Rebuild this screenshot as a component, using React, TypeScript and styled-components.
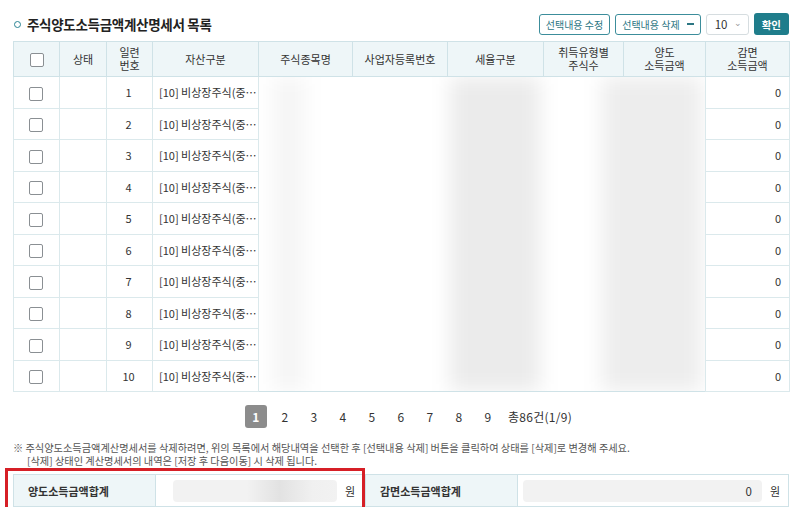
import React, { FC } from 'react'
import styled, { createGlobalStyle } from 'styled-components'

const GlobalStyle = createGlobalStyle`
  html, body {
    margin: 0;
    padding: 0;
    background: #fff;
    font-family: "Noto Sans CJK KR", "Noto Sans", sans-serif;
    color: #333;
  }
`

const COLUMNS = [
  { w: 46, label: '' },
  { w: 47, label: '상태' },
  { w: 46, label: '일련\n번호' },
  { w: 106, label: '자산구분' },
  { w: 94, label: '주식종목명' },
  { w: 95, label: '사업자등록번호' },
  { w: 96, label: '세율구분' },
  { w: 80, label: '취득유형별\n주식수' },
  { w: 82, label: '양도\n소득금액' },
  { w: 84, label: '감면\n소득금액' },
]

const ROWS = Array.from({ length: 10 }, (_, i) => i + 1)
const PAGES = [1, 2, 3, 4, 5, 6, 7, 8, 9]

// blurred-out columns: width + grey strength of each smudge strip
const SMUDGES = [
  { w: 14, tone: 0 },
  { w: 32, tone: 0.04 },
  { w: 145, tone: 0 },
  { w: 90, tone: 0.08 },
  { w: 62, tone: 0 },
  { w: 100, tone: 0.07 },
  { w: 30, tone: 0 },
]

const App: FC = () => {
  return (
    <>
      <GlobalStyle />
      <Page>
        <TopBar>
          <Title>
            <TitleDot />
            주식양도소득금액계산명세서 목록
          </Title>
          <Actions>
            <OutlineButton>선택내용 수정</OutlineButton>
            <OutlineButton>
              선택내용 삭제 <Minus />
            </OutlineButton>
            <PageSize>
              10 <Chevron>⌄</Chevron>
            </PageSize>
            <PrimaryButton>확인</PrimaryButton>
          </Actions>
        </TopBar>

        <Table>
          <colgroup>
            {COLUMNS.map((c, i) => (
              <col key={i} style={{ width: c.w }} />
            ))}
          </colgroup>
          <thead>
            <tr>
              {COLUMNS.map((c, i) => (
                <Th key={i}>{i === 0 ? <CheckBox /> : c.label}</Th>
              ))}
            </tr>
          </thead>
          <tbody>
            {ROWS.map((n) => (
              <tr key={n}>
                <Td $align="center"><CheckBox /></Td>
                <Td />
                <Td $align="center">{n}</Td>
                <Td $align="left">[10] 비상장주식(중…</Td>
                {n === 1 && (
                  <Redacted colSpan={5} rowSpan={10}>
                    <BlurLayer>
                      {SMUDGES.map((s, i) => (
                        <Smudge key={i} $w={s.w} $tone={s.tone} />
                      ))}
                    </BlurLayer>
                  </Redacted>
                )}
                <Td $align="right">0</Td>
              </tr>
            ))}
          </tbody>
        </Table>

        <Pager>
          {PAGES.map((p) => (
            <PageNum key={p} $active={p === 1}>{p}</PageNum>
          ))}
          <Total>총86건(1/9)</Total>
        </Pager>

        <Notes>
          <NoteLine>※ 주식양도소득금액계산명세서를 삭제하려면, 위의 목록에서 해당내역을 선택한 후 [선택내용 삭제] 버튼을 클릭하여 상태를 [삭제]로 변경해 주세요.</NoteLine>
          <NoteLine $indent>[삭제] 상태인 계산명세서의 내역은 [저장 후 다음이동] 시 삭제 됩니다.</NoteLine>
        </Notes>

        <Summary>
          <Highlight />
          <SumLabel>양도소득금액합계</SumLabel>
          <SumValue>
            <AmountBox $blurred />
            <Unit>원</Unit>
          </SumValue>
          <SumLabel>감면소득금액합계</SumLabel>
          <SumValue>
            <AmountBox>0</AmountBox>
            <Unit>원</Unit>
          </SumValue>
        </Summary>
      </Page>
    </>
  )
}

const Page = styled.div`
  width: 800px;
  padding: 12px 11px 0 13px;
  box-sizing: border-box;
`

const TopBar = styled.div`
  display: flex;
  align-items: center;
  justify-content: space-between;
  height: 24px;
  margin-bottom: 5px;
`

const Title = styled.h2`
  display: flex;
  align-items: center;
  gap: 6px;
  margin: 0;
  font-size: 13.5px;
  font-weight: 700;
  color: #222;
  letter-spacing: -0.3px;
`

const TitleDot = styled.span`
  width: 5px;
  height: 5px;
  border: 1.5px solid #2a8494;
  border-radius: 50%;
  margin-left: 1px;
`

const Actions = styled.div`
  display: flex;
  align-items: center;
  gap: 5px;
`

const OutlineButton = styled.button`
  display: flex;
  align-items: center;
  gap: 6px;
  height: 21px;
  padding: 0 6px;
  border: 1px solid #3c8d9b;
  border-radius: 3px;
  background: #fff;
  color: #2c7683;
  font-family: inherit;
  font-size: 10px;
`

const Minus = styled.span`
  width: 7px;
  height: 2px;
  background: #2c7683;
  margin-left: 1px;
`

const PageSize = styled.div`
  display: flex;
  align-items: center;
  justify-content: space-between;
  width: 43px;
  height: 21px;
  box-sizing: border-box;
  padding: 0 6px 0 8px;
  border: 1px solid #d6dde0;
  border-radius: 3px;
  font-size: 11.5px;
  color: #333;
`

const Chevron = styled.span`
  font-size: 9px;
  color: #999;
  line-height: 1;
  margin-top: -4px;
`

const PrimaryButton = styled.button`
  height: 22px;
  padding: 0 8px;
  border: none;
  border-radius: 3px;
  background: #1f7d8b;
  color: #fff;
  font-family: inherit;
  font-size: 10.5px;
  font-weight: 700;
`

const Table = styled.table`
  width: 776px;
  table-layout: fixed;
  border-collapse: collapse;
  font-size: 11px;
  border-left: 1px solid #cfe2e7;
  border-right: 1px solid #cfe2e7;
  border-bottom: 1px solid #cfe2e7;
`

const Th = styled.th`
  height: 34px;
  padding: 0;
  background: #eef6f8;
  border: 1px solid #cfe2e7;
  font-weight: 400;
  color: #333;
  line-height: 13px;
  white-space: pre-line;
  text-align: center;
  vertical-align: middle;
`

const Td = styled.td<{ $align?: 'left' | 'center' | 'right' }>`
  height: 30.4px;
  padding: 0 8px 0 6px;
  border: 1px solid #dbe9ec;
  text-align: ${(p) => p.$align || 'center'};
  color: #333;
  white-space: nowrap;
  overflow: hidden;
  text-overflow: clip;
  vertical-align: middle;
`

const Redacted = styled.td`
  padding: 0;
  border: none;
  background: #fff;
  overflow: hidden;
`

const BlurLayer = styled.div`
  display: flex;
  height: 314px;
  filter: blur(10px);
`

const Smudge = styled.div<{ $w: number; $tone: number }>`
  width: ${(p) => p.$w}px;
  flex-shrink: 0;
  background: rgba(0, 0, 0, ${(p) => p.$tone});
`

const CheckBox = styled.span`
  display: inline-block;
  width: 12px;
  height: 12px;
  border: 1px solid #8a8f93;
  border-radius: 2px;
  background: #fff;
  vertical-align: middle;
`

const Pager = styled.div`
  display: flex;
  align-items: center;
  justify-content: center;
  gap: 7px;
  margin-top: 12px;
  padding-left: 15px;
  height: 24px;
  font-size: 12px;
`

const PageNum = styled.span<{ $active?: boolean }>`
  display: flex;
  align-items: center;
  justify-content: center;
  width: 22px;
  height: 23px;
  border-radius: 3px;
  background: ${(p) => (p.$active ? '#8c8c8c' : 'transparent')};
  color: ${(p) => (p.$active ? '#fff' : '#333')};
  font-weight: ${(p) => (p.$active ? 700 : 400)};
`

const Total = styled.span`
  margin-left: 2px;
  color: #333;
  letter-spacing: 0.3px;
`

const Notes = styled.div`
  margin-top: 13px;
  font-size: 10.2px;
  color: #555;
  line-height: 13px;
`

const NoteLine = styled.div<{ $indent?: boolean }>`
  height: 13px;
  padding-left: ${(p) => (p.$indent ? '14px' : '0')};
  white-space: nowrap;
`

const Summary = styled.div`
  position: relative;
  display: grid;
  grid-template-columns: 142px 210px 152px 272px;
  width: 776px;
  height: 33px;
  margin-top: 7px;
  border: 1px solid #cfe2e7;
  box-sizing: border-box;
`

const Highlight = styled.div`
  position: absolute;
  left: -9px;
  top: -7px;
  width: 360px;
  height: 43px;
  border: 3px solid #d61f26;
  box-sizing: border-box;
  pointer-events: none;
`

const SumLabel = styled.div`
  display: flex;
  align-items: center;
  padding-left: 14px;
  background: #eef6f8;
  border-right: 1px solid #cfe2e7;
  font-size: 11px;
  font-weight: 700;
  color: #333;
`

const SumValue = styled.div`
  display: flex;
  align-items: center;
  gap: 8px;
  padding: 0 10px 0 5px;
  border-right: 1px solid #cfe2e7;
  &:last-child {
    border-right: none;
  }
  &:nth-child(3) {
    padding-left: 17px;
  }
`

const AmountBox = styled.div<{ $blurred?: boolean }>`
  flex: 1;
  height: 22px;
  display: flex;
  align-items: center;
  justify-content: flex-end;
  padding-right: 10px;
  border-radius: 4px;
  background: ${(p) =>
    p.$blurred
      ? 'linear-gradient(90deg, #f2f2f2 0%, #f2f2f2 45%, #e2e2e2 65%, #f0f0f0 85%, #f2f2f2 100%)'
      : '#f2f2f2'};
  font-size: 11.5px;
  color: #333;
`

const Unit = styled.span`
  font-size: 11px;
  color: #333;
`

export default App
